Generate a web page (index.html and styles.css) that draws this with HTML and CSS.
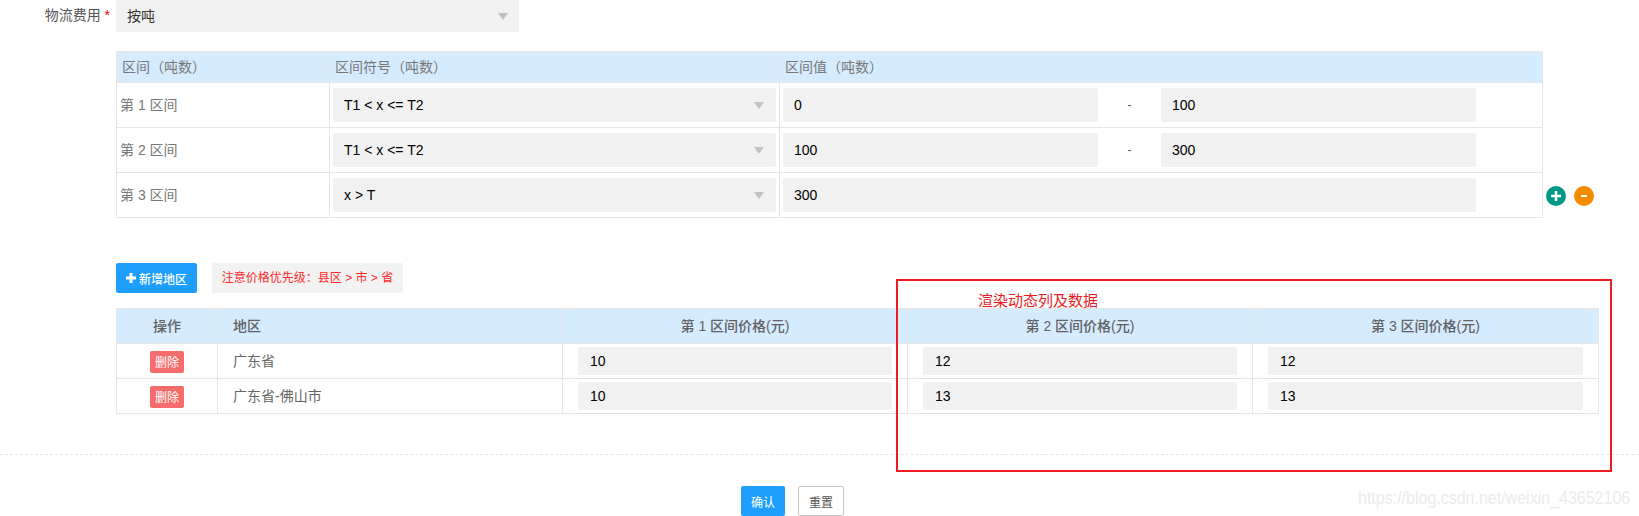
FILE: index.html
```html
<!DOCTYPE html>
<html lang="zh-CN">
<head>
<meta charset="utf-8">
<title>物流费用</title>
<link rel="stylesheet" href="styles.css">
</head>
<body>
<main class="page">
  <section class="form-area">
    <div class="field">
      <label class="field-label">物流费用 <span class="req">*</span></label>
      <div class="select select-top"><span>按吨</span><i class="arrow"></i></div>
    </div>

    <div class="range-wrap">
      <table class="range-table">
        <colgroup><col class="rc1"><col class="rc2"><col></colgroup>
        <thead>
          <tr><th>区间（吨数）</th><th>区间符号（吨数）</th><th>区间值（吨数）</th></tr>
        </thead>
        <tbody>
          <tr>
            <td class="name">第 1 区间</td>
            <td class="ctl"><div class="select"><span>T1 &lt; x &lt;= T2</span><i class="arrow"></i></div></td>
            <td class="ctl"><div class="pair"><div class="input half">0</div><span class="dash">-</span><div class="input half">100</div></div></td>
          </tr>
          <tr>
            <td class="name">第 2 区间</td>
            <td class="ctl"><div class="select"><span>T1 &lt; x &lt;= T2</span><i class="arrow"></i></div></td>
            <td class="ctl"><div class="pair"><div class="input half">100</div><span class="dash">-</span><div class="input half">300</div></div></td>
          </tr>
          <tr>
            <td class="name">第 3 区间</td>
            <td class="ctl"><div class="select"><span>x &gt; T</span><i class="arrow"></i></div></td>
            <td class="ctl"><div class="pair"><div class="input full">300</div></div></td>
          </tr>
        </tbody>
      </table>
      <div class="round-actions">
        <button class="round green" type="button" aria-label="add"><svg viewBox="0 0 10 10" width="10" height="10"><path d="M3.750 0h2.500v3.750H10v2.500H6.250V10h-2.500V6.250H0v-2.500h3.750z" fill="#fff"/></svg></button>
        <button class="round orange" type="button" aria-label="remove"><svg viewBox="0 0 6 2" width="6" height="2"><path d="M0 0h6v2H0z" fill="#fff"/></svg></button>
      </div>
    </div>

    <div class="toolbar">
      <button class="btn-add" type="button"><svg class="plus-icon" viewBox="0 0 10 10" width="10" height="10"><path d="M3.500 0h3v3.500H10v3H6.500V10h-3V6.500H0v-3h3.500z" fill="#fff"/></svg>新增地区</button>
      <div class="note">注意价格优先级：县区 &gt; 市 &gt; 省</div>
    </div>

    <table class="price-table">
      <colgroup><col class="pc1"><col class="pc2"><col class="pc3"><col class="pc3"><col class="pc4"></colgroup>
      <thead>
        <tr><th class="center">操作</th><th class="region-h">地区</th><th class="center">第 1 区间价格(元)</th><th class="center">第 2 区间价格(元)</th><th class="center">第 3 区间价格(元)</th></tr>
      </thead>
      <tbody>
        <tr>
          <td class="center"><button class="btn-del" type="button">删除</button></td>
          <td class="region">广东省</td>
          <td class="price"><div class="input">10</div></td>
          <td class="price"><div class="input">12</div></td>
          <td class="price"><div class="input">12</div></td>
        </tr>
        <tr>
          <td class="center"><button class="btn-del" type="button">删除</button></td>
          <td class="region">广东省-佛山市</td>
          <td class="price"><div class="input">10</div></td>
          <td class="price"><div class="input">13</div></td>
          <td class="price"><div class="input">13</div></td>
        </tr>
      </tbody>
    </table>
  </section>

  <div class="divider"></div>

  <div class="footer-actions">
    <button class="btn-ok" type="button">确认</button>
    <button class="btn-reset" type="button">重置</button>
  </div>

  <div class="annotation"><span class="annotation-text">渲染动态列及数据</span></div>
  <div class="watermark">https://blog.csdn.net/weixin_43652106</div>
</main>
</body>
</html>
```
FILE: styles.css
```css
* { box-sizing: border-box; }
html, body { margin: 0; padding: 0; background: #fff; }
body {
  font-family: "Liberation Sans", "Noto Sans CJK SC", sans-serif;
  font-size: 14px;
  color: #666;
}
.page { position: relative; width: 1639px; height: 516px; overflow: hidden; }
button { font-family: inherit; border: 0; padding: 0; cursor: pointer; }

.form-area { padding-left: 116px; }

.field { display: flex; height: 32px; position: relative; }
.field-label {
  width: 116px;
  margin-left: -116px;
  padding-right: 6px;
  line-height: 30px;
  text-align: right;
  color: #555;
}
.req { color: #e00; }

.select, .input {
  background: #f1f1f1;
  border-radius: 2px;
  color: #000;
  height: 34px;
  line-height: 34px;
  padding: 0 11px;
}
.select { display: flex; justify-content: space-between; align-items: center; padding-right: 12px; }
.select-top { width: 403px; height: 32px; line-height: 30px; color: #333; padding-right: 11px; }
.select-top span { margin-top: -1px; }
.arrow {
  width: 0;
  height: 0;
  border: 5.5px solid transparent;
  border-top: 7px solid #c2c2c2;
  border-bottom: 0;
}

.range-wrap { display: flex; align-items: flex-end; margin-top: 19px; }
.range-table, .price-table {
  border-collapse: collapse;
  table-layout: fixed;
}
.range-table { width: 1427px; }
.rc1 { width: 213px; }
.rc2 { width: 450px; }
.range-table th, .range-table td,
.price-table th, .price-table td { border: 1px solid #e6e6e6; padding: 0; }
.range-table th {
  height: 31px;
  background: #d5ebfe;
  font-weight: 400;
  text-align: left;
  padding: 0 0 2px 5px;
  color: #777;
}
.range-table td { height: 45px; }
.range-table td.name { padding: 0 0 2px 3px; color: #777; }
.range-table td.ctl { padding: 0 3px; }
.pair { display: flex; align-items: center; width: 693px; }
.input.half { width: 315px; }
.input.full { width: 693px; }
.dash { width: 63px; text-align: center; font-size: 12px; color: #555; }

.round-actions { display: flex; gap: 8px; margin: 0 0 12px 3px; }
.round {
  display: flex;
  align-items: center;
  justify-content: center;
  width: 20px;
  height: 20px;
  border-radius: 50%;
}
.green { background: #009688; }
.orange { background: #f28b00; }

.toolbar { display: flex; gap: 15px; margin-top: 45px; }
.btn-add {
  display: flex;
  align-items: center;
  justify-content: center;
  gap: 3px;
  width: 81px;
  height: 30px;
  background: #1e9fff;
  border-radius: 2px;
  color: #fff;
  font-size: 12px;
  font-weight: 500;
}
.note {
  width: 191px;
  height: 30px;
  line-height: 30px;
  text-align: center;
  background: #f2f2f2;
  border-radius: 2px;
  color: #ff2a2a;
  font-size: 12px;
}

.price-table { width: 1482px; margin-top: 15px; }
.pc1 { width: 101px; }
.pc2 { width: 345px; }
.pc3 { width: 345px; }
.pc4 { width: 346px; }
.price-table th {
  height: 35px;
  background: #d5ebfe;
  color: #606266;
  font-size: 14px;
  font-weight: 500;
  text-align: center;
  padding-bottom: 3px;
}
.price-table td { height: 35px; }
.price-table .region-h { text-align: left; padding-left: 15px; }
.price-table .region { padding: 0 0 2px 15px; color: #666; }
.center { text-align: center; }
.btn-del {
  display: block;
  margin: 1px auto 0;
  width: 34px;
  height: 22px;
  background: #f56c6c;
  border-radius: 2px;
  color: #fff;
  font-size: 12px;
}
.price-table td.price { padding: 0 15px; }
.price-table .input { height: 28px; line-height: 28px; padding: 0 12px; }

.divider { margin-top: 40px; border-top: 1px dashed #e6e6e6; }

.footer-actions { display: flex; justify-content: flex-start; gap: 13px; margin: 31px 0 0 741px; }
.btn-ok, .btn-reset { height: 30px; font-size: 12px; border-radius: 2px; }
.btn-ok { width: 44px; background: #1e9fff; color: #fff; }
.btn-reset { width: 46px; background: #fff; border: 1px solid #c9c9c9; color: #555; }

.annotation {
  position: absolute;
  left: 896px;
  top: 279px;
  width: 716px;
  height: 193px;
  border: 2px solid #ed1c24;
}
.annotation-text {
  position: absolute;
  left: 80px;
  top: 11px;
  font-size: 15px;
  line-height: 17px;
  color: #ed1c24;
}
.watermark {
  position: absolute;
  left: 1358px;
  top: 488px;
  font-size: 16px;
  line-height: 20px;
  color: #ebebeb;
  transform: scaleY(1.12);
}
```
